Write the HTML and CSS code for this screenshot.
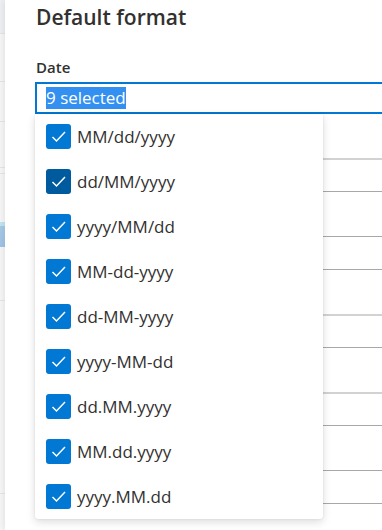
FILE: index.html
```html
<!DOCTYPE html>
<html lang="en">
<head>
<meta charset="UTF-8">
<meta name="viewport" content="width=device-width, initial-scale=1.0">
<title>Default format</title>
<link rel="stylesheet" href="styles.css">
</head>
<body>

<div class="page">
    <div class="rail">
        <div class="rail-item rail-top" style="height: 33px"></div>
        <div class="rail-item" style="height: 47px"></div>
        <div class="rail-item" style="height: 39px"></div>
        <div class="rail-item" style="height: 45px"></div>
        <div class="rail-item" style="height: 5px"></div>
        <div class="rail-gap" style="height: 48px"></div>
        <div class="rail-blob"></div>
        <div class="rail-item" style="height: 53px"></div>
        <div class="rail-item" style="height: 192px"></div>
    </div>

    <div class="panel">
        <h1 class="title">Default format</h1>
        <div class="field-label">Date</div>

        <div class="combo">
            <div class="combo-input"><span class="combo-text">9 selected</span></div>

            <div class="menu">
                <div class="option"><span class="check"><svg viewBox="0 0 25 25"><path d="M6.5 13l4 4 8.5-9"/></svg></span><span>MM/dd/yyyy</span></div>
                <div class="option hover"><span class="check"><svg viewBox="0 0 25 25"><path d="M6.5 13l4 4 8.5-9"/></svg></span><span>dd/MM/yyyy</span></div>
                <div class="option"><span class="check"><svg viewBox="0 0 25 25"><path d="M6.5 13l4 4 8.5-9"/></svg></span><span>yyyy/MM/dd</span></div>
                <div class="option"><span class="check"><svg viewBox="0 0 25 25"><path d="M6.5 13l4 4 8.5-9"/></svg></span><span>MM-dd-yyyy</span></div>
                <div class="option"><span class="check"><svg viewBox="0 0 25 25"><path d="M6.5 13l4 4 8.5-9"/></svg></span><span>dd-MM-yyyy</span></div>
                <div class="option"><span class="check"><svg viewBox="0 0 25 25"><path d="M6.5 13l4 4 8.5-9"/></svg></span><span>yyyy-MM-dd</span></div>
                <div class="option"><span class="check"><svg viewBox="0 0 25 25"><path d="M6.5 13l4 4 8.5-9"/></svg></span><span>dd.MM.yyyy</span></div>
                <div class="option"><span class="check"><svg viewBox="0 0 25 25"><path d="M6.5 13l4 4 8.5-9"/></svg></span><span>MM.dd.yyyy</span></div>
                <div class="option"><span class="check"><svg viewBox="0 0 25 25"><path d="M6.5 13l4 4 8.5-9"/></svg></span><span>yyyy.MM.dd</span></div>
            </div>
        </div>

        <div class="fields">
            <div class="field light"></div>
            <div class="field"></div>
            <div class="field light"></div>
            <div class="field light"></div>
            <div class="field"></div>
        </div>
    </div>
</div>

</body>
</html>
```

FILE: styles.css
```css
body {
    margin: 0;
    padding: 0;
    font-family: "Open Sans", "Noto Sans", sans-serif;
    color: #323130;
    background: #ffffff;
    overflow: hidden;
}
.page {
    display: flex;
    height: 530px;
}
.rail {
    width: 5px;
    flex-shrink: 0;
    background: #f7f7f7;
    display: flex;
    flex-direction: column;
}
.rail-item {
    border-bottom: 1px solid #e6e6e6;
}
.rail-top {
    background: #eef0f4;
}
.rail-blob {
    height: 25px;
    background: linear-gradient(to bottom, #bfe6f2 0, #bfe6f2 4px, #a9cbe8 4px, #9fc3e6 100%);
}
.panel {
    flex: 1;
    padding: 0 0 0 30px;
    background: #ffffff;
    box-shadow: -2px 0 6px rgba(0, 0, 0, 0.08);
    z-index: 1;
}
.title {
    margin: 0;
    padding-top: 2px;
    font-size: 21px;
    font-weight: 600;
    line-height: 30px;
    padding-left: 1px;
}
.field-label {
    margin-top: 24px;
    padding-left: 1px;
    font-size: 15px;
    font-weight: 600;
    line-height: 22px;
}
.combo {
    position: relative;
    margin-top: 4px;
}
.combo-input {
    height: 28px;
    border: 2px solid #0078d4;
    border-right: none;
    display: flex;
    align-items: center;
    padding-left: 9px;
}
.combo-text {
    background: #3390f0;
    color: #ffffff;
    font-size: 17px;
    line-height: 22px;
}
.menu {
    position: absolute;
    top: 100%;
    left: 0;
    width: 288px;
    background: #ffffff;
    border-radius: 0 0 3px 3px;
    box-shadow: 0 3px 8px rgba(0, 0, 0, 0.14), 0 0 2px rgba(0, 0, 0, 0.1);
    z-index: 10;
}
.option {
    height: 45px;
    display: flex;
    align-items: center;
    padding-left: 11px;
    gap: 6px;
    font-size: 17px;
}
.check {
    width: 25px;
    height: 25px;
    border-radius: 3px;
    background: #0078d4;
    display: flex;
}
.option.hover .check {
    background: #005a9e;
}
.check svg {
    width: 25px;
    height: 25px;
    fill: none;
    stroke: #ffffff;
    stroke-width: 1.5;
}
.fields {
    margin-top: 44px;
}
.field {
    height: 32px;
    border-top: 1px solid #a8a8a8;
    border-bottom: 1px solid #a8a8a8;
    margin-bottom: 44px;
}
.field.light {
    border-top: 2px solid #d2d2d2;
    height: 31px;
}
```
